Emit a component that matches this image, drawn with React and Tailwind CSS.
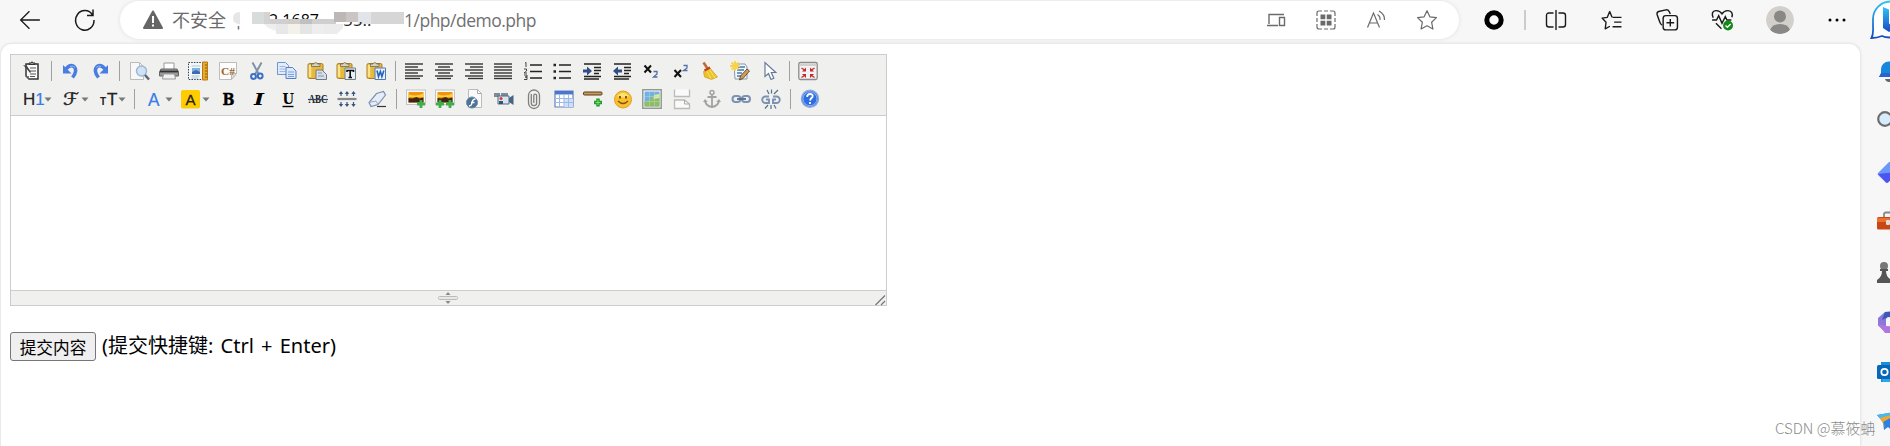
const Icon = ({ children, className = 'size-5' }) => (
  <svg viewBox="0 0 20 20" className={`shrink-0 overflow-visible ${className}`} fill="none">
    {children}
  </svg>
);

const Lines = ({ rows }) => (
  <g stroke="#333" strokeWidth="1.4">
    {rows.map(([y, x1, x2]) => (
      <path key={y} d={`M${x1} ${y}H${x2}`} />
    ))}
  </g>
);

const Clipboard = ({ children }) => (
  <>
    <rect x="1" y="2.5" width="15" height="15" rx="1.5" fill="#e9b93c" stroke="#a87d22" />
    <path d="M3 4v12" stroke="#fbe38b" strokeWidth="2.5" />
    <path d="M4.500 5.500V3h2.500a1.800 1.800 0 0 1 3.500 0H13v2.500z" fill="#d9d4c2" stroke="#75694a" strokeWidth=".8" />
    {children}
  </>
);

const Photo = () => (
  <>
    <rect x=".5" y="1" width="19" height="14.500" fill="#fafaf8" stroke="#c4c4c4" />
    <path d="M2.500 3h15v10.500h-15z" fill="#ee9516" />
    <path d="M2.500 5.500q8 2.500 15-1V8h-15z" fill="#ffd23a" />
    <path d="M2.500 9l4 .5 4-1.500 3 1.500 4-1v5h-15z" fill="#3f2512" />
  </>
);

const plus = (x, y) => `M${x} ${y - 4}v8M${x - 4} ${y}h8`;

const ICONS = {
  source: (
    <>
      <path d="M4 3h12v15H7l-3-3z" fill="#fafafa" stroke="#333" strokeWidth="1.5" />
      <path d="M7 3.500V2h2q1-2.500 2 0h2v1.500z" fill="#999" stroke="#333" />
      <path d="M8 7h6M8 10h6M8 13h6M8 15.500h5" stroke="#555" />
      <path d="M1 4l4 1 4 6-1 1-4-5z" fill="#444" />
      <path d="M4 15l3 3v-3z" fill="#777" />
    </>
  ),
  undo: (
    <>
      <path d="M5 8q4-5 8-2.500 4 4-1.500 11" stroke="#4a7de0" strokeWidth="3.500" />
      <path d="M2 4v8.500h8.500z" fill="#4a7de0" />
      <path d="M9 5.500q3-1.500 5 1" stroke="#8db3f4" />
    </>
  ),
  redo: (
    <>
      <path d="M15 8q-4-5-8-2.500-4 4 1.500 11" stroke="#4a7de0" strokeWidth="3.500" />
      <path d="M18 4v8.500H9.500z" fill="#4a7de0" />
      <path d="M11 5.500q-3-1.500-5 1" stroke="#8db3f4" />
    </>
  ),
  preview: (
    <>
      <path d="M1.500 1.500h9l4 4v13h-13z" fill="#f8f8f8" stroke="#bbb" />
      <path d="M10.500 1.500v4h4" stroke="#bbb" />
      <circle cx="12.500" cy="10" r="5" fill="#cfe2f6" stroke="#9db8d6" strokeWidth="1.500" />
      <path d="M16 14l4 4.500" stroke="#59667a" strokeWidth="2.500" />
    </>
  ),
  print: (
    <>
      <path d="M5 2h10v7H5z" fill="#fff" stroke="#999" />
      <path d="M2 8h16l1.500 3v4H.500v-4z" fill="#999" stroke="#666" />
      <path d="M1 10.500h18" stroke="#333" strokeWidth="1.800" />
      <path d="M4.500 13h11l1 5h-13z" fill="#f1f1f1" stroke="#999" />
    </>
  ),
  template: (
    <>
      <path d="M.500 1.500h14v17H.500z" fill="#f4f7f9" stroke="#345" strokeDasharray="1.500 1.200" />
      <path d="M3.500 5h9M3.500 15h8M3.500 17h7" stroke="#b4c5d3" />
      <path d="M4 7h8v6H4z" fill="#7fb0e2" />
      <path d="M4 11l4-2 4 2v2H4z" fill="#3b6da9" />
      <path d="M14.500 1h5v18h-5z" fill="#e6a92d" stroke="#b97a14" />
      <path d="M17 4h2M17 7h2M17 10h2M17 13h2M17 16h2" stroke="#8a5a0b" />
    </>
  ),
  code: (
    <>
      <path d="M1.500 1.500h17v11l-5 6h-12z" fill="#fdfdfd" stroke="#bdbdbd" />
      <path d="M18.500 12.500h-5v6z" fill="#ddd" stroke="#bbb" />
      <text x="3" y="13.500" fontSize="11" fontWeight="700" fontFamily="Liberation Serif, serif" fill="#9b6329" textLength="14" lengthAdjust="spacingAndGlyphs">C#</text>
    </>
  ),
  cut: (
    <>
      <path d="M5.500 1.500l6.500 12M14.500 1.500L8 13.500" stroke="#7c93ae" strokeWidth="2" />
      <circle cx="6.500" cy="15.500" r="2.400" stroke="#3c70c6" strokeWidth="2" />
      <circle cx="13.200" cy="15" r="2.400" stroke="#3c70c6" strokeWidth="2" />
    </>
  ),
  copy: (
    <>
      <path d="M.500 1.500h8l3 3v9H.500z" fill="#e2edfc" stroke="#7194cf" />
      <path d="M2.500 5.500h6M2.500 8h6M2.500 10.500h6" stroke="#9bb8e4" />
      <path d="M9 6.500h6.500l3.500 3.500v7.500H9z" fill="#dbe8fb" stroke="#587fc4" />
      <path d="M11 11h6M11 13.500h6M11 15.500h6" stroke="#7ca1dc" />
    </>
  ),
  paste: (
    <Clipboard>
      <path d="M9 9h6l4.500 4.500v5H9z" fill="#d7dee7" stroke="#707986" />
      <path d="M11 12h4M11 15h6" stroke="#8995a5" />
    </Clipboard>
  ),
  plainpaste: (
    <Clipboard>
      <path d="M9 7h10.500v11.500H9z" fill="#e9eef2" stroke="#71808c" />
      <path d="M11 11V9.500h6.500V11M14.200 9v7.500M12.500 16.500h3.500" stroke="#111" strokeWidth="1.600" />
    </Clipboard>
  ),
  wordpaste: (
    <Clipboard>
      <path d="M9 7h10.500v11.500H9z" fill="#e9f1fb" stroke="#5079b5" />
      <path d="M11 9.500l1.500 6 1.900-5 1.500 5 2-6" stroke="#2865ba" strokeWidth="1.600" />
    </Clipboard>
  ),
  left: <Lines rows={[[3, 1, 19], [6, 1, 14], [9, 1, 19], [12, 1, 14], [15, 1, 19], [17.5, 1, 16]]} />,
  center: <Lines rows={[[3, 1, 19], [6, 4, 16], [9, 1, 19], [12, 4, 16], [15, 1, 19], [17.5, 3, 17]]} />,
  right: <Lines rows={[[3, 1, 19], [6, 6, 19], [9, 1, 19], [12, 6, 19], [15, 1, 19], [17.5, 4, 19]]} />,
  full: <Lines rows={[[3, 1, 19], [6, 1, 19], [9, 1, 19], [12, 1, 19], [15, 1, 19], [17.5, 1, 19]]} />,
  ol: (
    <>
      <path d="M7 4h12M7 10.500h12M7 17h12" stroke="#222" strokeWidth="1.400" />
      <path d="M2 2l1-.5V6M1 8h2.500v2L1 12h3M1 14h3v2H2h2v2.500H1" stroke="#444" />
    </>
  ),
  ul: (
    <>
      <path d="M7 4h12M7 10.500h12M7 17h12" stroke="#222" strokeWidth="1.400" />
      <path d="M1.500 2.800h2.500v2.500H1.500zM1.500 9.200h2.500v2.500H1.500zM1.500 15.700h2.500v2.500H1.500z" fill="#222" />
    </>
  ),
  indent: (
    <>
      <path d="M2 3h17M12 6.500h7M12 9.500h7M12 12.500h5M2 15.500h17M2 18h15" stroke="#222" strokeWidth="1.400" />
      <path d="M1 8.500h4V5.500l5 4.500-5 4.500v-3H1z" fill="#314f87" />
    </>
  ),
  outdent: (
    <>
      <path d="M2 3h17M12 6.500h7M12 9.500h7M12 12.500h5M2 15.500h17M2 18h15" stroke="#222" strokeWidth="1.400" />
      <path d="M10 8.500H6V5.500L1 10l5 4.500v-3h4z" fill="#314f87" />
    </>
  ),
  sub: (
    <>
      <path d="M3.500 4.500l6.500 7M10 4.500l-6.500 7" stroke="#111" strokeWidth="2" />
      <path d="M12.500 10.500h3.500v2.500l-3.500 3h4" stroke="#5570a8" strokeWidth="1.300" />
    </>
  ),
  sup: (
    <>
      <path d="M3.500 9l6.500 7M10 9l-6.500 7" stroke="#111" strokeWidth="2" />
      <path d="M12.500 4.500h3.500V7l-3.500 2.500h4" stroke="#5570a8" strokeWidth="1.300" />
    </>
  ),
  clear: (
    <>
      <path d="M3.500 1.500l4 6" stroke="#b86f35" strokeWidth="2.500" />
      <path d="M3.500 10.500l6-4 8 9.500-6 2.500-7-2.500z" fill="#ecc325" stroke="#c3961c" strokeWidth=".6" />
      <path d="M4.500 9.500l5.500-3" stroke="#cc392c" strokeWidth="2.200" />
      <path d="M7 10.500l4 7M9.500 9l5.500 8" stroke="#fae371" />
    </>
  ),
  quick: (
    <>
      <path d="M4 3h11l2 3v12H5z" fill="#f5f8fb" stroke="#8799ad" />
      <path d="M8 6h7M7 9h7M7 12h5M7 15h5" stroke="#4478b2" strokeWidth="1.300" />
      <path d="M5 0v10M0 5h10M1.500 1.500l7 7M8.500 1.500l-7 7" stroke="#f8d24a" strokeWidth="1.800" />
      <path d="M17 8l2.500 2-6.500 7.500-3.500 1.500 1-4z" fill="#d39a52" stroke="#4b3825" strokeWidth=".8" />
    </>
  ),
  cursor: <path d="M5 1.500v14l3.500-3 2.500 6 2.800-1.200-2.500-5.800h4.500z" fill="#fff" stroke="#66799b" strokeWidth="1.200" />,
  fullscreen: (
    <>
      <rect x=".800" y="1.500" width="18.400" height="17" rx="1.500" fill="#f2f2f2" stroke="#8c8c8c" strokeWidth="1.300" />
      <path d="M2 4h16" stroke="#c4c4c4" strokeWidth="1.500" />
      <path d="M3.500 7l3 2M16.500 7l-3 2M3.500 16.500l3-2M16.500 16.500l-3-2" stroke="#c9353b" strokeWidth="1.500" />
      <path d="M8 6.500v4H4zM12 6.500v4h4zM8 17v-4H4zM12 17v-4h4z" fill="#c9252c" />
    </>
  ),
  bold: <text x="3.500" y="16" fontSize="17" fontWeight="700" fontFamily="DejaVu Serif, serif" fill="#000" stroke="#000" strokeWidth=".4" textLength="12" lengthAdjust="spacingAndGlyphs">B</text>,
  italic: <text x="5" y="16" fontSize="16" fontWeight="700" fontStyle="italic" fontFamily="DejaVu Serif, serif" fill="#000" textLength="10" lengthAdjust="spacingAndGlyphs">I</text>,
  underline: (
    <>
      <text x="4.500" y="14.500" fontSize="15" fontWeight="700" fontFamily="DejaVu Serif, serif" fill="#000" textLength="11.500" lengthAdjust="spacingAndGlyphs">U</text>
      <path d="M4.500 17.500h11" stroke="#000" strokeWidth="1.400" />
    </>
  ),
  strike: (
    <>
      <text x=".500" y="14" fontSize="12" fontWeight="700" fontFamily="Liberation Serif, serif" fill="#222" textLength="19" lengthAdjust="spacingAndGlyphs">ABC</text>
      <path d="M0 10.500h20" stroke="#2d4777" strokeWidth="1.200" />
    </>
  ),
  lineheight: (
    <>
      <path d="M.500 10h19" stroke="#888" strokeWidth="2.200" />
      <path d="M4 3v4M10 3v4M16.500 3v4M4 13v4M10 13v4M16.500 13v4" stroke="#39587f" strokeWidth="1.200" />
      <path d="M1.800 5L4 2l2.200 3zM7.800 5L10 2l2.200 3zM14.300 5l2.200-3 2.200 3zM1.800 15L4 18l2.200-3zM7.800 15l2.200 3 2.200-3zM14.300 15l2.200 3 2.200-3z" fill="#39587f" />
    </>
  ),
  eraser: (
    <>
      <path d="M9.500 4.500l7-2L18.500 6l-7.500 9.500-7 2-2-4z" fill="#e7edf6" stroke="#7c8fb0" strokeWidth="1.200" />
      <path d="M2 13.500l7-1.500 2 3.500" stroke="#9caac2" />
      <path d="M10 17.500h9" stroke="#333" strokeWidth="1.200" />
    </>
  ),
  image: (
    <>
      <Photo />
      <path d={plus(15, 15)} stroke="#3fae4b" strokeWidth="2.800" />
    </>
  ),
  multiimage: (
    <>
      <Photo />
      <path d={plus(5, 15)} stroke="#3fae4b" strokeWidth="2.800" />
      <path d={plus(15, 15)} stroke="#3fae4b" strokeWidth="2.800" />
    </>
  ),
  flash: (
    <>
      <path d="M3.500.500h9l4 4v14h-13z" fill="#fafafa" stroke="#bbb" />
      <path d="M12.500.500v4h4" stroke="#aaa" />
      <circle cx="7" cy="13.500" r="5.500" fill="#4d7396" stroke="#6d8ba6" />
      <path d="M10.500 10q-3 0-3.500 4-.5 3-3 3M6 13.500h3.500" stroke="#fff" strokeWidth="1.400" />
    </>
  ),
  media: (
    <>
      <path d="M0 4h6v4H0zM7 4h7v3H7z" fill="#7d8b99" />
      <path d="M4 7h11v8H4z" fill="#dbe3ea" stroke="#526b84" />
      <path d="M15 9l4.500-3v10L15 13z" fill="#466483" />
      <path d="M5 12h4v3H5z" fill="#30567d" />
      <circle cx="7" cy="9.500" r="1.500" fill="#d73831" />
    </>
  ),
  file: (
    <>
      <rect x="4.500" y="1" width="11" height="18.500" rx="5.500" stroke="#808080" strokeWidth="1.300" />
      <path d="M7.300 5v9a2.600 2.600 0 0 0 5.300 0V6.500a1.400 1.400 0 0 0-2.800 0V14" stroke="#808080" strokeWidth="1.300" />
    </>
  ),
  table: (
    <>
      <path d="M1 2h18v16H1z" fill="#fff" stroke="#5e82c5" strokeWidth="1.200" />
      <path d="M1 2h18v3.500H1z" fill="#4c76cb" />
      <path d="M10 9.500h9V18h-9z" fill="#cfdff9" />
      <path d="M5.500 6v12M10 6v12M14.500 6v12M1 9.500h18M1 13.500h18" stroke="#9eb9e8" />
    </>
  ),
  hr: (
    <>
      <rect x=".500" y="3" width="18.500" height="3" rx="1" fill="#ce9954" stroke="#593c20" />
      <path d={plus(15, 13.5)} stroke="#239c2d" strokeWidth="3.500" />
      <path d="M15 11v5M12.500 13.500h5" stroke="#7be07c" />
    </>
  ),
  emoticon: (
    <>
      <circle cx="10" cy="10.500" r="8.500" fill="#f9c02c" stroke="#dfa126" />
      <path d="M4 7q6-6 12 0-6 3-12 0" fill="#fde77c" />
      <path d="M7 7v2.500M13 7v2.500" stroke="#6f4415" strokeWidth="1.700" />
      <path d="M5 12q5 5 10 0" stroke="#80511b" strokeWidth="1.400" />
    </>
  ),
  map: (
    <>
      <path d="M.800.800h18.400v18.400H.800z" fill="#fff" stroke="#929a91" strokeWidth="1.500" />
      <path d="M2.500 2.500h15v15h-15z" fill="#6fb0ea" />
      <path d="M2.500 12l5-1 4-5 6-1.500v13h-15z" fill="#8fbd61" />
      <path d="M12 6l5.500-1v4l-6 1z" fill="#dce7b1" />
      <path d="M7.500 2.500v15M12.500 2.500v15M2.500 7.500h15M2.500 12.500h15" stroke="#b8d8cf" strokeWidth=".5" />
    </>
  ),
  pagebreak: (
    <>
      <path d="M2.500.500v7h15v-7" fill="#fafafa" stroke="#bbb" strokeWidth="1.300" />
      <path d="M2.500 19.500V11h10l5 4v4.500z" fill="#fafafa" stroke="#bbb" strokeWidth="1.300" />
      <path d="M12.500 11v4h5" stroke="#aaa" />
    </>
  ),
  anchor: (
    <>
      <circle cx="10" cy="3.500" r="2" stroke="#a3a3a3" strokeWidth="1.500" />
      <path d="M10 5.500v12M5.500 8h9M3 12q1 5 7 6 6-1 7-6" stroke="#a3a3a3" strokeWidth="1.800" />
      <path d="M1 13l2-3 3 3zM14 13l3-3 2 3z" fill="#a3a3a3" />
    </>
  ),
  link: (
    <>
      <rect x="1.500" y="7" width="8" height="6" rx="3" stroke="#7c92b2" strokeWidth="2" />
      <rect x="11" y="7" width="8" height="6" rx="3" stroke="#7c92b2" strokeWidth="2" />
      <path d="M6 10h9" stroke="#536c90" strokeWidth="1.800" />
    </>
  ),
  unlink: (
    <>
      <path d="M8 7.500H4.500a3 3 0 0 0 0 6.500H8v-3.500H5M12 7.500h3.500a3 3 0 0 1 0 6.500H12v-3.500h3" stroke="#7c92b2" strokeWidth="1.900" />
      <path d="M6 1l2 4M10.500.500v4M17 1l-4 4M4 19.500l3-3.500M10 16v4M15 19.500L13 16" stroke="#58718c" strokeWidth="1.200" />
    </>
  ),
  about: (
    <>
      <circle cx="10" cy="9.800" r="8.500" fill="#2f6de0" stroke="#8aa9de" strokeWidth="1.500" />
      <circle cx="10" cy="9.800" r="7" stroke="#a9c5f8" strokeWidth=".8" />
      <path d="M7 7.800q.5-3 3.300-2.800 3.200.5 2.200 3-2 1.500-2.500 3.500M10 13v2" stroke="#fff" strokeWidth="1.800" />
    </>
  ),
};

const ROW_ONE = [
  ['source'],
  ['undo', 'redo'],
  ['preview', 'print', 'template', 'code', 'cut', 'copy', 'paste', 'plainpaste', 'wordpaste'],
  ['left', 'center', 'right', 'full', 'ol', 'ul', 'indent', 'outdent', 'sub', 'sup', 'clear', 'quick', 'cursor'],
  ['fullscreen'],
];

const ROW_TWO = [
  ['bold', 'italic', 'underline', 'strike', 'lineheight', 'eraser'],
  ['image', 'multiimage', 'flash', 'media', 'file', 'table', 'hr', 'emoticon', 'map', 'pagebreak', 'anchor', 'link', 'unlink'],
  ['about'],
];

const Separator = () => (
  <span className="h-5 w-[9.2px] shrink-0 flex justify-center">
    <i className="w-px h-full bg-[#a0a0a0]" />
  </span>
);

const ToolGroups = ({ groups }) =>
  groups.map((group, i) => (
    <div key={group[0]} className="flex items-center">
      {i > 0 && <Separator />}
      {group.map((name) => (
        <button key={name} title={name} className="w-[29.6px] h-7 flex items-center justify-center">
          <Icon>{ICONS[name]}</Icon>
        </button>
      ))}
    </div>
  ));

const Dropdown = ({ children }) => (
  <button className="w-[37.4px] h-7 shrink-0 flex items-center justify-center">
    <svg viewBox="0 0 30 20" className="w-[30px] h-5 overflow-visible">
      {children}
      <path d="M22.500 8.500h7L26 12.500z" fill="#777" />
    </svg>
  </button>
);

const Editor = () => (
  <div className="w-[877px] h-[252px] border border-[#ccc] bg-white flex flex-col">
    <div className="h-[61px] shrink-0 bg-[#f0f0ee] border-b border-[#ccc] pl-[6px] pt-[1.500px]">
      <div className="flex items-center h-7">
        <ToolGroups groups={ROW_ONE} />
      </div>
      <div className="flex items-center h-7 pl-[1px]">
        <Dropdown>
          <text x="1" y="16" fontSize="17" fontFamily="Liberation Sans, sans-serif" fill="#222" stroke="#222" strokeWidth=".2">H<tspan fill="#3a7bea" stroke="#3a7bea">1</tspan></text>
        </Dropdown>
        <Dropdown>
          <text x="4" y="16" fontSize="17" fontFamily="DejaVu Sans, DejaVu Serif, serif" fill="#222" stroke="#222" strokeWidth=".4" textLength="16" lengthAdjust="spacingAndGlyphs">ℱ</text>
        </Dropdown>
        <Dropdown>
          <text x="4" y="16" fontSize="10" fontWeight="700" fontFamily="Liberation Sans, sans-serif" fill="#222">T</text>
          <text x="11" y="16" fontSize="17" fontFamily="Liberation Sans, sans-serif" fill="#222" stroke="#222" strokeWidth=".3">T</text>
        </Dropdown>
        <Separator />
        <Dropdown>
          <text x="5" y="17" fontSize="18" fontFamily="Liberation Sans, sans-serif" fill="#3a7bea" stroke="#3a7bea" strokeWidth=".2" textLength="11.500" lengthAdjust="spacingAndGlyphs">A</text>
        </Dropdown>
        <Dropdown>
          <rect x="1" y="1" width="19" height="18.500" rx="2" fill="#fc0" />
          <text x="5.500" y="15.500" fontSize="15" fontFamily="Liberation Sans, sans-serif" fill="#222" stroke="#222" strokeWidth=".3">A</text>
        </Dropdown>
        <ToolGroups groups={ROW_TWO} />
      </div>
    </div>
    <div className="flex-1" />
    <div className="h-[15px] shrink-0 bg-[#f0f0ee] border-t border-[#ccc] flex items-center">
      <span className="w-[427px]" />
      <svg viewBox="0 0 20 14" className="w-5 h-3.5">
        <path d="M7.500 4L10 1l2.500 3zM7.500 10h5L10 13z" fill="#888" />
        <rect x=".5" y="5.500" width="19" height="3" rx="1" fill="#e8e8e8" stroke="#bbb" />
      </svg>
      <svg viewBox="0 0 12 12" className="size-3 ml-auto mt-1">
        <path d="M1.500 11L11 1.500M7 11l4-4" stroke="#777" strokeWidth="1.200" />
      </svg>
    </div>
  </div>
);

// Redacted host part of the address
const MaskedHost = () => (
  <svg viewBox="0 0 172 38" className="w-[172px] h-[38px] shrink-0">
    <path d="M1 18q0-6 7-6v12q-7 0-7-6z" fill="#e6e6e6" />
    <path d="M6.500 26v3.500" stroke="#777" strokeWidth="1.500" />
    <rect x="20" y="12" width="12" height="12" fill="#d8dcdb" />
    <rect x="32" y="12" width="6" height="12" fill="#d3d3d3" />
    <rect x="38" y="19" width="66" height="5" fill="#cfcfcf" />
    <rect x="56" y="19" width="12" height="5" fill="#d0cdc8" />
    <rect x="68" y="19" width="12" height="5" fill="#bfc0c2" />
    <rect x="102" y="12" width="12" height="10" fill="#bcb8b8" />
    <rect x="114" y="12" width="12" height="10" fill="#cac4c3" />
    <rect x="126" y="12" width="13" height="12" fill="#e1e5ea" />
    <rect x="139" y="12" width="33" height="12" fill="#d6d6d6" />
    <path d="M32 24h12v7q-8-2-12-7z" fill="#eee" />
    <rect x="44" y="24" width="12" height="10" fill="#e8e8e8" />
    <rect x="56" y="24" width="12" height="10" fill="#f3f1ea" />
    <rect x="68" y="24" width="12" height="10" fill="#e5e5e5" />
    <rect x="80" y="24" width="12" height="10" fill="#eee" />
    <path d="M92 24h19v4l-6 6H92z" fill="#ececec" />
    <svg x="36" y="14" width="66" height="5">
      <text x="1" y="12" fontSize="16" fontFamily="Open Sans, sans-serif" fill="#000">2.1687.</text>
    </svg>
    <svg x="108" y="22" width="32" height="4">
      <text x="3" y="3.500" fontSize="17" fontFamily="Open Sans, sans-serif" fill="#222">55..</text>
    </svg>
  </svg>
);

const AddressBar = () => (
  <div className="ml-6 mt-px w-[1339px] shrink-0 h-[38px] rounded-full bg-white shadow-[0_0_4px_rgba(0,0,0,0.10)] flex items-center">
    <svg viewBox="0 0 22 20" className="w-[22px] h-5 ml-[22px] mt-[-1px]">
      <path d="M11 1.500L20 18H2z" fill="#666" stroke="#666" strokeWidth="2" strokeLinejoin="round" />
      <path d="M11 6v7M11 14.500v2" stroke="#fff" strokeWidth="2" />
    </svg>
    <span className="ml-2 mt-[-2px] w-[54px] text-[18px] leading-[24px] text-[#6b6b6b] font-['Noto_Sans_CJK_SC',sans-serif]">不安全</span>
    <span className="ml-[6px] mt-[-2px] flex items-center">
      <MaskedHost />
      <span className="w-[132px] mt-[2px] text-[17.500px] leading-[24px] tracking-[-0.5px] text-[#707070] font-['Open_Sans',sans-serif] whitespace-nowrap">1/php/demo.php</span>
    </span>
    <div className="ml-auto mr-[21px] mt-[-1px] flex items-center gap-[30px] text-[#6b6b6b]">
      <Icon>
        <path d="M3 14V4.500h15M1 15.500h11M13.500 7.500h5v8h-5z" stroke="currentColor" strokeWidth="1.400" />
      </Icon>
      <Icon>
        <path d="M1 6V3q0-2 2-2h3M14 1h3q2 0 2 2v3M19 14v3q0 2-2 2h-3M6 19H3q-2 0-2-2v-3M8 1h4M8 19h4M1 8v4M19 8v4" stroke="currentColor" strokeWidth="1.200" />
        <path d="M4.500 4.500h4.800v4.800H4.500zM10.700 4.500h4.800v4.800h-4.800zM4.500 10.700h4.800v4.800H4.500zM10.700 10.700h4.800v4.800h-4.800z" fill="currentColor" />
      </Icon>
      <Icon>
        <path d="M1.500 17.500L7.500 3l6 14.500M3.500 13h8M11.500 4.500q3 2 2.500 5.500M13 1q6 3.500 5.500 9" stroke="currentColor" strokeWidth="1.200" />
      </Icon>
      <Icon className="w-[22px] h-[22px]">
        <path d="M10 1.500l2.600 5.600 6 .7-4.400 4.200 1.200 6.200L10 15.200l-5.400 3 1.200-6.200L1.400 7.800l6-.7z" stroke="currentColor" strokeWidth="1.100" strokeLinejoin="round" />
      </Icon>
    </div>
  </div>
);

const BingLogo = () => (
  <svg viewBox="0 0 40 40" className="w-10 h-10 shrink-0">
    <defs>
      <linearGradient id="bing" x1="0" y1="0" x2="0" y2="1">
        <stop offset="0" stopColor="#31c3f3" />
        <stop offset="1" stopColor="#1849c7" />
      </linearGradient>
    </defs>
    <path d="M20 1.500a18 18 0 0 1 0 36q-5 0-8-1.500-5 2-10.500 2 2-4 1.500-11V19A17.500 17.500 0 0 1 20 1.500z" fill="#fff" stroke="url(#bing)" strokeWidth="1.800" />
    <path d="M13 7l6 2.500V24l9-5-4-2-2-5 10 4v7l-13 9-6-4z" fill="url(#bing)" />
  </svg>
);

const Header = () => (
  <header className="h-[43px] shrink-0 flex text-[#1a1a1a]">
    <Icon className="size-[22px] ml-[19px] mt-[9px]">
      <path d="M19 10H1.500M9.500 2L1.500 10l8 8" stroke="currentColor" strokeWidth="1.200" />
    </Icon>
    <svg viewBox="0 0 22 24" fill="none" className="w-[22px] h-6 ml-[33px] mt-[8px] shrink-0">
      <path d="M18.500 7A9.200 9.800 0 1 0 20 12M19 1.500V7.500h-6" stroke="currentColor" strokeWidth="1.500" />
    </svg>
    <AddressBar />
    <div className="flex items-center h-10 ml-[25px] shrink-0">
      <Icon>
        <circle cx="10" cy="10" r="7.200" stroke="#000" strokeWidth="5" />
      </Icon>
      <i className="w-[1.500px] h-5 bg-[#ccc] ml-5" />
      <svg viewBox="0 0 22 20" fill="none" className="w-[22px] h-5 ml-[19px]" stroke="currentColor" strokeWidth="1.400">
        <path d="M8.500 3H4Q1.500 3 1.500 5.500v9Q1.500 17 4 17h4.500M13.500 3H18q2.500 0 2.500 2.500v9Q20.500 17 18 17h-4.500M11 0v20" />
      </svg>
      <Icon className="size-[21px] ml-[34px]">
        <path d="M10.500 7L8.300 1.500 6 7l-5 .7 3.800 4L4 18l4.500-2.500M11 7h8.500M12.500 11.500h7M11 16h8.500" stroke="currentColor" strokeWidth="1.300" strokeLinejoin="round" />
      </Icon>
      <Icon className="size-[22px] ml-[34px]">
        <path d="M5.500 14.500Q4 14 3.500 12L1 5q-.5-2 1.500-2.700L9 .800q2-.3 3 1.500l1 2.200" stroke="currentColor" strokeWidth="1.300" />
        <rect x="6.500" y="6" width="13" height="13" rx="2.500" stroke="currentColor" strokeWidth="1.300" />
        <path d="M13 9v7M9.500 12.500h7" stroke="currentColor" strokeWidth="1.300" />
      </Icon>
      <Icon className="size-[22px] ml-[33px]">
        <path d="M2 8Q-.500 2 4.500 1.500q3.500-.2 5.500 3 2-3.200 5.500-3 5 .5 3.500 6M1 10h4l2-4 3 7 3-6 1.500 3h4M4.500 13l5 5" stroke="currentColor" strokeWidth="1.300" />
        <circle cx="15.500" cy="15" r="4.500" fill="#118a18" />
        <path d="M13.200 15l1.700 1.600 3-3" stroke="#fff" strokeWidth="1.200" />
      </Icon>
      <svg viewBox="0 0 28 28" className="size-7 ml-[33px] rounded-full">
        <circle cx="14" cy="14" r="14" fill="#d3d0cc" />
        <circle cx="14" cy="10.500" r="6" fill="#8a8886" />
        <path d="M4 24q2-6 10-6t10 6q-4 4-10 4T4 24z" fill="#8a8886" />
      </svg>
      <svg viewBox="0 0 18 6" className="w-[18px] h-1.5 ml-[34px]">
        <circle cx="2" cy="3" r="1.500" />
        <circle cx="9" cy="3" r="1.500" />
        <circle cx="16" cy="3" r="1.500" />
      </svg>
    </div>
    <div className="ml-[24px] w-[23px] overflow-hidden">
      <BingLogo />
    </div>
  </header>
);

const SIDE_APPS = {
  bell: (
    <>
      <path d="M2 17l2-3V9a8 7.500 0 0 1 16 0v5l2 3z" fill="#1687dc" />
      <path d="M2 17l2-4h16l2 4z" fill="#2863cf" />
      <path d="M8 19h8q-1 3-4 3t-4-3z" fill="#666" />
    </>
  ),
  search: (
    <>
      <path d="M14 14l8 8" stroke="#8b4cc0" strokeWidth="4" />
      <circle cx="8" cy="9" r="6.800" fill="#d6ecfc" stroke="#6d6d6d" strokeWidth="2.200" />
    </>
  ),
  tag: (
    <>
      <path d="M1 13L12 2h10v10L11 22.500q-1 .5-2 0L1 15q-.5-1 0-2z" fill="#6c97fb" />
      <path d="M1 14l9-1 12-1-11 10.500q-1 .5-2 0z" fill="#4e54f2" />
    </>
  ),
  toolbox: (
    <>
      <path d="M7 7V4q0-1.500 2-1.500h6q2 0 2 1.500v3" stroke="#888" strokeWidth="1.800" fill="none" />
      <rect y="7" width="24" height="12.500" rx="1.500" fill="#c94714" />
      <path d="M0 8h24v4H0z" fill="#ed702d" />
      <rect x="9" y="10" width="4" height="5" rx="1" fill="#ddd" />
    </>
  ),
  games: (
    <>
      <circle cx="7" cy="6" r="4" fill="#777" />
      <path d="M3 9h8v2H9q0 5 4 8v4H0v-3q5-3 5-9H3z" fill="#555" />
      <path d="M13 5l5-3v20h-4V10z" fill="#b66be0" />
    </>
  ),
  office: (
    <>
      <path d="M1 8l7-6 6 1-5 6v7l5 6-5 .5-8-7z" fill="#8c79d7" />
      <path d="M8 2l10-1 5 7-12-1-6 3z" fill="#375bb9" />
      <path d="M1 14l8 2 12 1-8 6H8z" fill="#b277df" />
    </>
  ),
  outlook: (
    <>
      <path d="M4 2h20v20H4z" fill="#1490df" />
      <path d="M4 17l20-5v10H6z" fill="#28a8ea" />
      <rect x="0" y="5" width="14" height="14" rx="1.500" fill="#0867b9" />
      <circle cx="7.500" cy="12" r="3.200" stroke="#fff" strokeWidth="1.700" fill="none" />
    </>
  ),
  drop: (
    <>
      <path d="M0 5l24-4-7 21-6-5-4 3-1-8z" fill="#2b82e5" />
      <path d="M0 5l24-4L6 12z" fill="#46b9ee" />
      <path d="M3 8l21-6L6 12l3 7z" fill="#f7a42a" />
    </>
  ),
};

const Sidebar = () => (
  <aside className="w-[29px] shrink-0 pt-[4px] pl-[16px] overflow-hidden">
    {Object.entries(SIDE_APPS).map(([name, art]) => (
      <div key={name} className="h-[50px] w-6 flex items-center">
        <svg viewBox="0 0 24 24" className="size-6">{art}</svg>
      </div>
    ))}
  </aside>
);

const App = () => (
  <div className="relative w-[1890px] h-[446px] overflow-hidden bg-[#f7f7f7] flex flex-col">
    <Header />
    <div className="flex flex-1 min-h-0">
      <main className="w-[1861px] shrink-0 rounded-t-[12px] border border-b-0 border-[#e9e9e9] bg-white pl-[9px] pt-[10px] shadow-[0_0_3px_rgba(0,0,0,0.08)]">
        <Editor />
        <div className="mt-[26px] flex items-center text-black">
          <button className="w-[86px] h-[29px] border border-[#767676] rounded-[3px] bg-[#efefef] text-[16.670px] leading-[26px] font-['Noto_Sans_CJK_SC',sans-serif]">提交内容</button>
          <span className="ml-[6px] mt-[-2px] text-[20px] leading-[28px] [word-spacing:2px] whitespace-nowrap font-['Noto_Sans','Noto_Sans_CJK_SC',sans-serif]">(提交快捷键: Ctrl + Enter)</span>
        </div>
      </main>
      <Sidebar />
    </div>
    <span className="absolute left-[1775px] top-[418px] text-[15px] leading-5 text-[#8c8c8c] font-light font-['Noto_Sans_CJK_SC',sans-serif] whitespace-nowrap">CSDN @慕筱蚺</span>
  </div>
);

export default App;
